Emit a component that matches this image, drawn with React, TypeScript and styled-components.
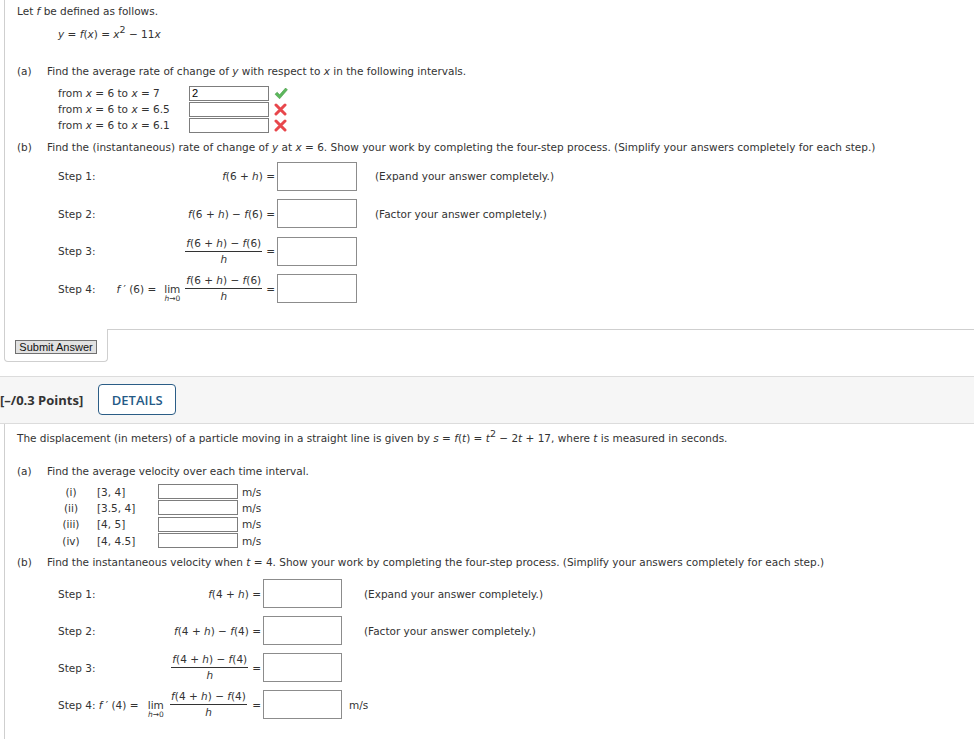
import React from 'react';
import styled, { createGlobalStyle } from 'styled-components';

const GlobalStyle = createGlobalStyle`
  html, body { margin: 0; padding: 0; background: #fff; }
  body {
    font-family: "DejaVu Sans", Verdana, sans-serif;
    font-size: 10.5px;
    line-height: 16px;
    color: #333;
  }
`;

const QuestionBody = styled.div<{ pt: number; pb: number }>`
  margin-left: 4px;
  border-left: 1px solid #cfcfcf;
  padding: ${p => p.pt}px 0 ${p => p.pb}px 12px;
`;

const Line = styled.div<{ mt?: number; indent?: number }>`
  margin-top: ${p => p.mt || 0}px;
  margin-left: ${p => p.indent || 0}px;
  white-space: nowrap;
`;

const V = styled.i`
  font-style: italic;
`;

const Sup = styled.sup`
  font-size: 9.5px;
  line-height: 0;
  vertical-align: 5px;
`;

const Part = styled.div<{ mt: number }>`
  display: flex;
  margin-top: ${p => p.mt}px;
  white-space: nowrap;
`;

const PartLabel = styled.div`
  width: 30px;
  flex: none;
`;

const PartContent = styled.div`
  flex: 1;
`;

const IntervalGrid = styled.div<{ cols: string; mt: number; rowH: number }>`
  display: grid;
  grid-template-columns: ${p => p.cols};
  grid-auto-rows: ${p => p.rowH}px;
  align-items: center;
  margin: ${p => p.mt}px 0 0 11px;
  white-space: nowrap;
`;

const Numeral = styled.span`
  text-align: center;
`;

const SmallInput = styled.div`
  box-sizing: border-box;
  width: 80px;
  height: 15px;
  border: 1px solid #7d7d7d;
  font-family: "Liberation Sans", Arial, sans-serif;
  font-size: 11px;
  line-height: 13px;
  padding-left: 2px;
  color: #000;
`;

const Unit = styled.span`
  margin-left: 4px;
`;

const Mark = styled.span`
  display: inline-flex;
  margin-left: 5px;
  align-items: center;
`;

const StepGrid = styled.div<{ cols: string; mt: number; gap: number }>`
  display: grid;
  grid-template-columns: ${p => p.cols};
  grid-auto-rows: 28px;
  row-gap: ${p => p.gap}px;
  align-items: center;
  margin: ${p => p.mt}px 0 0 11px;
  white-space: nowrap;
`;

const StepLabel = styled.span``;

const Expr = styled.div<{ span?: boolean }>`
  display: flex;
  align-items: center;
  justify-content: ${p => (p.span ? 'space-between' : 'flex-end')};
  grid-column: ${p => (p.span ? '1 / span 2' : 'auto')};
`;

const Run = styled.span<{ mr?: number }>`
  white-space: pre;
  margin-right: ${p => p.mr || 0}px;
`;

const Frac = styled.span`
  display: inline-flex;
  flex-direction: column;
  align-items: center;
  line-height: 13px;
`;

const Num = styled.span`
  padding: 0 1px 1px;
  border-bottom: 1px solid #333;
`;

const Den = styled.span`
  padding-top: 1px;
`;

const Lim = styled.span`
  display: inline-flex;
  flex-direction: column;
  align-items: center;
  line-height: 11px;
  margin: 0 5px 0 8px;
  padding-top: 10px;
`;

const LimSub = styled.span`
  font-size: 7.5px;
  line-height: 8px;
`;

const Eq = styled.span`
  margin-left: 4px;
`;

const BigInput = styled.div<{ w: number }>`
  box-sizing: border-box;
  width: ${p => p.w}px;
  height: 29px;
  margin-left: 2px;
  border: 1px solid #8c8c8c;
`;

const Note = styled.span<{ ml: number }>`
  margin-left: ${p => p.ml}px;
`;

const Footer = styled.div`
  display: flex;
  margin-left: 4px;
`;

const Tab = styled.div`
  box-sizing: border-box;
  width: 104px;
  height: 33px;
  padding: 10px 0 0 10px;
  border: 1px solid #cfcfcf;
  border-top: none;
  border-radius: 0 0 4px 4px;
`;

const SubmitButton = styled.button`
  box-sizing: border-box;
  height: 14px;
  width: 82px;
  padding: 0;
  font-family: "Liberation Sans", Arial, sans-serif;
  font-size: 11px;
  line-height: 12px;
  color: #111;
  background: #e1e1e1;
  border: 1px solid #707070;
  border-radius: 0;
`;

const FooterRule = styled.div`
  flex: 1;
  border-top: 1px solid #cfcfcf;
`;

const PointsBar = styled.div`
  display: flex;
  align-items: center;
  gap: 15px;
  height: 46px;
  margin-top: 14px;
  background: #f6f6f6;
  border-top: 1px solid #dcdcdc;
  border-bottom: 1px solid #dcdcdc;
  font-family: "Open Sans", "Noto Sans", sans-serif;
`;

const Points = styled.span`
  font-size: 13px;
  font-weight: 700;
  color: #333;
`;

const DetailsButton = styled.button`
  box-sizing: border-box;
  width: 78px;
  height: 31px;
  background: #fff;
  border: 1px solid #2b5d86;
  border-radius: 4px;
  font-family: "Open Sans", "Noto Sans", sans-serif;
  font-size: 13px;
  font-weight: 600;
  color: #255a86;
  padding: 0;
`;

const Check = () => (
  <svg width="14" height="13" viewBox="0 0 14 13">
    <path d="M1 7.2 L3.2 5.2 L5.6 7.8 L11.6 1 L13.4 2.8 L5.6 11.8 Z" fill="#5cb85c" stroke="#4a9a4a" strokeWidth="0.6" strokeLinejoin="round" />
  </svg>
);

const Cross = () => (
  <svg width="13" height="13" viewBox="0 0 13 13">
    <path d="M2 2 L11 11 M11 2 L2 11" stroke="#e8474c" strokeWidth="3" strokeLinecap="round" />
  </svg>
);

type Step = { label: string; expr: React.ReactNode; note?: string };

const frac = (a: string) => (
  <Frac>
    <Num>
      <V>f</V>({a} + <V>h</V>) − <V>f</V>({a})
    </Num>
    <Den>
      <V>h</V>
    </Den>
  </Frac>
);

const makeSteps = (a: string): Step[] => [
  {
    label: 'Step 1:',
    expr: (
      <Run>
        <V>f</V>({a} + <V>h</V>) =
      </Run>
    ),
    note: '(Expand your answer completely.)',
  },
  {
    label: 'Step 2:',
    expr: (
      <Run>
        <V>f</V>({a} + <V>h</V>) − <V>f</V>({a}) =
      </Run>
    ),
    note: '(Factor your answer completely.)',
  },
  {
    label: 'Step 3:',
    expr: (
      <>
        {frac(a)}
        <Eq>=</Eq>
      </>
    ),
  },
];

const limExpr = (a: string) => (
  <>
    <Run>
      <V>f</V> ′ ({a}) =
    </Run>
    <Lim>
      lim
      <LimSub>
        <V>h</V>→0
      </LimSub>
    </Lim>
    {frac(a)}
    <Eq>=</Eq>
  </>
);

const Steps: React.FC<{
  a: string;
  cols: string;
  mt: number;
  gap: number;
  boxW: number;
  noteMl: number;
  merged?: boolean;
  unit?: string;
}> = ({ a, cols, mt, gap, boxW, noteMl, merged, unit }) => (
  <StepGrid cols={cols} mt={mt} gap={gap}>
    {makeSteps(a).map(s => (
      <React.Fragment key={s.label}>
        <StepLabel>{s.label}</StepLabel>
        <Expr>{s.expr}</Expr>
        <BigInput w={boxW} />
        {s.note ? <Note ml={noteMl}>{s.note}</Note> : <span />}
      </React.Fragment>
    ))}
    {merged ? (
      <Expr span>
        <Run mr={2}>Step 4:</Run>
        {limExpr(a)}
      </Expr>
    ) : (
      <>
        <StepLabel>Step 4:</StepLabel>
        <Expr>{limExpr(a)}</Expr>
      </>
    )}
    <BigInput w={boxW} />
    {unit ? <Note ml={7}>{unit}</Note> : <span />}
  </StepGrid>
);

export default function App() {
  return (
    <>
      <GlobalStyle />
      <QuestionBody pt={3} pb={26}>
        <Line>
          Let <V>f</V> be defined as follows.
        </Line>
        <Line mt={7} indent={41}>
          <V>y</V> = <V>f</V>(<V>x</V>) = <V>x</V>
          <Sup>2</Sup> − 11<V>x</V>
        </Line>

        <Part mt={21}>
          <PartLabel>(a)</PartLabel>
          <PartContent>
            Find the average rate of change of <V>y</V> with respect to <V>x</V> in the following intervals.
            <IntervalGrid cols="131px 80px auto" mt={6} rowH={16}>
              <span>
                from <V>x</V> = 6 to <V>x</V> = 7
              </span>
              <SmallInput>2</SmallInput>
              <Mark>
                <Check />
              </Mark>
              <span>
                from <V>x</V> = 6 to <V>x</V> = 6.5
              </span>
              <SmallInput />
              <Mark>
                <Cross />
              </Mark>
              <span>
                from <V>x</V> = 6 to <V>x</V> = 6.1
              </span>
              <SmallInput />
              <Mark>
                <Cross />
              </Mark>
            </IntervalGrid>
          </PartContent>
        </Part>

        <Part mt={6}>
          <PartLabel>(b)</PartLabel>
          <PartContent>
            Find the (instantaneous) rate of change of <V>y</V> at <V>x</V> = 6. Show your work by completing
            the four-step process. (Simplify your answers completely for each step.)
            <Steps a="6" cols="54px 163px 82px auto" mt={7} gap={9.5} boxW={80} noteMl={18} />
          </PartContent>
        </Part>
      </QuestionBody>

      <Footer>
        <Tab>
          <SubmitButton>Submit Answer</SubmitButton>
        </Tab>
        <FooterRule />
      </Footer>

      <PointsBar>
        <Points>[–/0.3 Points]</Points>
        <DetailsButton>DETAILS</DetailsButton>
      </PointsBar>

      <QuestionBody pt={6} pb={20}>
        <Line>
          The displacement (in meters) of a particle moving in a straight line is given by <V>s</V> ={' '}
          <V>f</V>(<V>t</V>) = <V>t</V>
          <Sup>2</Sup> − 2<V>t</V> + 17, where <V>t</V> is measured in seconds.
        </Line>

        <Part mt={17}>
          <PartLabel>(a)</PartLabel>
          <PartContent>
            Find the average velocity over each time interval.
            <IntervalGrid cols="26px 13px 61px 80px auto" mt={5} rowH={16.3}>
              {[
                ['(i)', '[3, 4]'],
                ['(ii)', '[3.5, 4]'],
                ['(iii)', '[4, 5]'],
                ['(iv)', '[4, 4.5]'],
              ].map(([n, iv]) => (
                <React.Fragment key={n}>
                  <Numeral>{n}</Numeral>
                  <span />
                  <span>{iv}</span>
                  <SmallInput />
                  <Unit>m/s</Unit>
                </React.Fragment>
              ))}
            </IntervalGrid>
          </PartContent>
        </Part>

        <Part mt={5}>
          <PartLabel>(b)</PartLabel>
          <PartContent>
            Find the instantaneous velocity when <V>t</V> = 4. Show your work by completing the four-step
            process. (Simplify your answers completely for each step.)
            <Steps
              a="4"
              cols="43px 160px 81px auto"
              mt={10}
              gap={9}
              boxW={79}
              noteMl={22}
              merged
              unit="m/s"
            />
          </PartContent>
        </Part>
      </QuestionBody>
    </>
  );
}
